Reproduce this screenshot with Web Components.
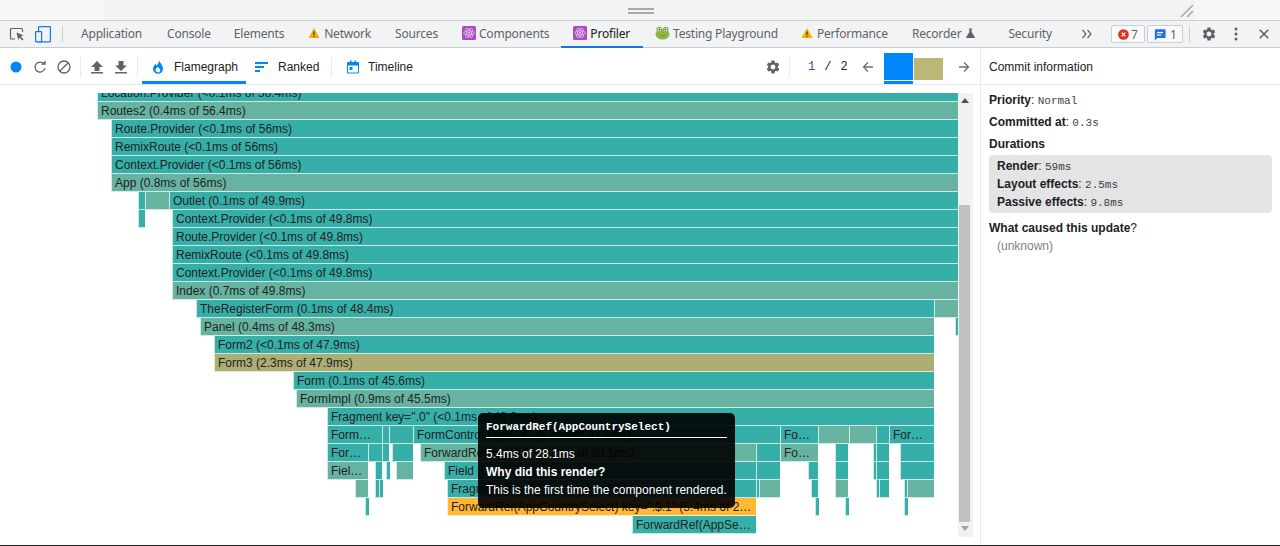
<!DOCTYPE html>
<html><head><meta charset="utf-8"><style>
html,body{margin:0;padding:0;background:#fff;overflow:hidden}
body{width:1280px;height:546px;font-family:"Liberation Sans",sans-serif;font-size:12px}
</style></head><body>
<dt-shell></dt-shell>
<script>
const svg=(w,h,vb,inner,extra='')=>`<svg width="${w}" height="${h}" viewBox="${vb}" ${extra}>${inner}</svg>`;
const GEAR='M19.14 12.94c.04-.3.06-.61.06-.94 0-.32-.02-.64-.07-.94l2.03-1.58c.18-.14.23-.41.12-.61l-1.92-3.32c-.12-.22-.37-.29-.59-.22l-2.39.96c-.5-.38-1.03-.7-1.62-.94l-.36-2.54c-.04-.24-.24-.41-.48-.41h-3.84c-.24 0-.43.17-.47.41l-.36 2.54c-.59.24-1.13.57-1.62.94l-2.39-.96c-.22-.08-.47 0-.59.22L2.74 8.87c-.12.21-.08.47.12.61l2.03 1.58c-.05.3-.09.63-.09.94s.02.64.07.94l-2.03 1.58c-.18.14-.23.41-.12.61l1.92 3.32c.12.22.37.29.59.22l2.39-.96c.5.38 1.03.7 1.62.94l.36 2.54c.05.24.24.41.48.41h3.84c.24 0 .44-.17.47-.41l.36-2.54c.59-.24 1.13-.56 1.62-.94l2.39.96c.22.08.47 0 .59-.22l1.92-3.32c.12-.22.07-.47-.12-.61l-2.01-1.58zM12 15.6c-1.98 0-3.6-1.62-3.6-3.6s1.62-3.6 3.6-3.6 3.6 1.62 3.6 3.6-1.62 3.6-3.6 3.6z';
const warn=svg(12,12,'0 0 12 12','<path d="M6 1 L11.6 11 H.4 Z" fill="#f2b200"/><rect x="5.4" y="4.4" width="1.2" height="3.6" fill="#333"/><rect x="5.4" y="8.8" width="1.2" height="1.2" fill="#333"/>');
const react=svg(14,14,'0 0 14 14','<rect width="14" height="14" rx="1.5" fill="#a94dc0"/><g fill="none" stroke="#e4c4ee" stroke-width=".8"><ellipse cx="7" cy="7" rx="5.2" ry="2.2"/><ellipse cx="7" cy="7" rx="5.2" ry="2.2" transform="rotate(60 7 7)"/><ellipse cx="7" cy="7" rx="5.2" ry="2.2" transform="rotate(120 7 7)"/></g><circle cx="7" cy="7" r="1.1" fill="#e4c4ee"/>');
const frog=svg(15,14,'0 0 15 14','<circle cx="4.2" cy="3.6" r="2.8" fill="#7fb43c"/><circle cx="10.8" cy="3.6" r="2.8" fill="#7fb43c"/><ellipse cx="7.5" cy="8.3" rx="7" ry="5.2" fill="#86bb45"/><circle cx="4.2" cy="3.4" r="1.5" fill="#fff"/><circle cx="10.8" cy="3.4" r="1.5" fill="#fff"/><circle cx="4.4" cy="3.6" r=".8" fill="#222"/><circle cx="10.6" cy="3.6" r=".8" fill="#222"/><path d="M3 8.6 Q7.5 10 12 8.6 Q7.5 12.6 3 8.6Z" fill="#e2604a"/>');
const flask=svg(11,12,'0 0 12 12','<path d="M4.2 1h3.6v1h-.6v3l3.4 5.4c.3.5 0 1.1-.6 1.1H2c-.6 0-.9-.6-.6-1.1L4.800 5V2h-.6z" fill="#5f6368"/>');

class DtTab extends HTMLElement{
  constructor(){super();this.attachShadow({mode:'open'}).innerHTML=`<style>
  :host{display:flex;align-items:center;gap:4px;height:26px;box-sizing:border-box;padding:0 var(--padr,12px) 2px 12px;font:12px "Noto Sans",sans-serif;color:#5f6368;white-space:nowrap;position:relative;letter-spacing:-.2px}
  :host([active]){color:#202124}
  :host([active])::after{content:"";position:absolute;left:0;right:0;bottom:-1px;height:2px;background:#1a73e8}
  </style><slot name="icon"></slot><slot></slot><slot name="after"></slot>`}
}
customElements.define('dt-tab',DtTab);

class DtTabbar extends HTMLElement{
  constructor(){super();this.attachShadow({mode:'open'}).innerHTML=`<style>
  :host{display:flex;align-items:center;height:28px;box-sizing:border-box;background:#f1f3f4;border-top:1px solid #cbcdd1;border-bottom:1px solid #cbcdd1;position:relative;padding-left:8px}
  .ic{display:flex;align-items:center;justify-content:center;flex:none}
  .sep{width:1px;height:16px;background:#cbcdd1;flex:none}
  .badge{display:flex;align-items:center;height:18px;box-sizing:border-box;border:1px solid #cbcdd1;border-radius:2px;background:#f8f9fa;font:12px "Noto Sans",sans-serif;color:#5f6368;padding:0 0 0 6px;flex:none}
  .right{display:flex;align-items:center;height:26px;margin-left:auto;padding-right:8px}
  </style>
  <div class="ic" style="width:18px">${svg(16,16,'0 0 16 16','<path d="M6 13H2.500a1 1 0 0 1-1-1V3.500a1 1 0 0 1 1-1h10a1 1 0 0 1 1 1V6" fill="none" stroke="#5f6368" stroke-width="1.2"/><path d="M7.500 6.500 14.500 9.300 11.800 10.500 14.500 13.400 13.200 14.600 10.600 11.600 9.200 14z" fill="#5f6368"/>')}</div>
  <div class="ic" style="width:16px;margin-left:9px">${svg(16,17,'0 0 16 17','<rect x="3.600" y=".6" width="11.800" height="15.200" rx=".6" fill="none" stroke="#1a73e8" stroke-width="1.2"/><rect x=".6" y="5.600" width="6" height="10.200" rx=".6" fill="#f1f3f4" stroke="#1a73e8" stroke-width="1.2"/>')}</div>
  <div class="sep" style="margin-left:11px"></div>
  <div style="width:6px"></div>
  <dt-tab style="--padr:13px">Application</dt-tab>
  <dt-tab style="--padr:11px">Console</dt-tab>
  <dt-tab>Elements</dt-tab>
  <dt-tab><span slot="icon" style="display:flex">${warn}</span>Network</dt-tab>
  <dt-tab>Sources</dt-tab>
  <dt-tab><span slot="icon" style="display:flex;margin-right:-1px">${react}</span>Components</dt-tab>
  <dt-tab active style="--padr:13px"><span slot="icon" style="display:flex;margin-right:-1px">${react}</span>Profiler</dt-tab>
  <dt-tab style="--padr:11px"><span slot="icon" style="display:flex;margin-right:-1px">${frog}</span>Testing Playground</dt-tab>
  <dt-tab><span slot="icon" style="display:flex">${warn}</span>Performance</dt-tab>
  <dt-tab style="--padr:20px">Recorder<span slot="after" style="display:flex">${flask}</span></dt-tab>
  <dt-tab>Security</dt-tab>
  <div class="right">
    <div class="ic" style="width:16px;margin-right:16px">${svg(12,10,'0 0 12 10','<path d="M1.500 1 5 5 1.500 9M6.500 1 10 5 6.500 9" fill="none" stroke="#5f6368" stroke-width="1.2"/>')}</div>
    <div class="badge" style="width:34px;gap:2px">${svg(11,11,'0 0 12 12','<circle cx="6" cy="6" r="5.800" fill="#d93025"/><path d="M4 4l4 4M8 4l-4 4" stroke="#fff" stroke-width="1.300"/>')}7</div>
    <div class="badge" style="width:36px;margin-left:2px;gap:4px">${svg(12,13,'0 0 14 14','<path d="M2 1h10.500a1 1 0 0 1 1 1v8a1 1 0 0 1-1 1H4L1 14V2a1 1 0 0 1 1-1z" fill="#1a73e8"/><rect x="3.500" y="4" width="7" height="1.400" fill="#fff"/><rect x="3.500" y="6.800" width="5" height="1.400" fill="#fff"/>')}1</div>
    <div class="sep" style="margin:0 11px 0 6px"></div>
    <div class="ic" style="width:16px">${svg(18,18,'0 0 24 24',`<path d="${GEAR}" fill="#5f6368"/>`)}</div>
    <div class="ic" style="width:16px;margin-left:11px">${svg(4,14,'0 0 4 14','<circle cx="2" cy="2" r="1.500" fill="#5f6368"/><circle cx="2" cy="7" r="1.500" fill="#5f6368"/><circle cx="2" cy="12" r="1.500" fill="#5f6368"/>')}</div>
    <div class="ic" style="width:16px;margin-left:12px">${svg(10,10,'0 0 10 10','<path d="M.7.7l8.600 8.600M9.300.7.7 9.300" stroke="#5f6368" stroke-width="1.600"/>')}</div>
  </div>`}
}
customElements.define('dt-tabbar',DtTabbar);

class DtTopstrip extends HTMLElement{
  constructor(){super();this.attachShadow({mode:'open'}).innerHTML=`<style>
  :host{display:flex;align-items:center;justify-content:center;height:20px;background:linear-gradient(90deg,#f6f7f7 0,#f6f7f7 103px,#f1f3f4 104px,#f1f3f4 1195px,#f6f8f8 1196px);position:relative}
  .grip{width:26px;height:6px;border-top:2px solid #a8abad;border-bottom:2px solid #a8abad;box-sizing:border-box;margin:2px 0 0 2px}
  .corner{position:absolute;left:1180px;top:4px}
  </style><div class="grip"></div><div class="corner">${svg(14,14,'0 0 14 14','<path d="M1 13 13 1M7 13 13 7" stroke="#a8abad" stroke-width="1.600"/>')}</div>`}
}
customElements.define('dt-topstrip',DtTopstrip);

class DtProfTool extends HTMLElement{
  constructor(){super();this.attachShadow({mode:'open'}).innerHTML=`<style>
  :host{display:flex;align-items:center;height:37px;box-sizing:border-box;padding-top:1px;flex:none;border-bottom:1px solid #e8eaed;font-size:12px;color:#202124;min-width:0}
  .i{display:flex;align-items:center;justify-content:center;flex:none;width:20px}
  .s{width:1px;height:20px;background:#e8eaed;flex:none}
  .t{display:flex;align-items:center;height:35px;box-sizing:border-box;flex:none;position:relative}
  .t svg{flex:none}
  .on::after{content:"";position:absolute;left:0;right:0;bottom:0;height:3px;background:#0088fa}
  .pg{font:12px "Liberation Mono",monospace;display:flex;gap:9px;flex:none;width:46px;margin-left:18px}
  .com{display:flex;gap:1px;height:35px;align-items:flex-start;flex:none;width:59px}
  .b1{position:relative;width:29px;height:35px;flex:none}
  .b1::before{content:"";position:absolute;left:0;right:0;top:4px;height:27px;background:#0088fa}
  .b1::after{content:"";position:absolute;left:0;right:0;bottom:0;height:3px;background:#0088fa}
  .b2{width:29px;height:22px;margin-top:9px;background:#bcb776;flex:none}
  </style>
  <div class="i" style="margin-left:6px">${svg(12,12,'0 0 12 12','<circle cx="6" cy="6" r="5.500" fill="#0088fa"/>')}</div>
  <div class="i" style="margin-left:4px">${svg(14,14,'0 0 14 14','<path d="M11.200 4.200A5 5 0 1 0 12 8" fill="none" stroke="#5f6368" stroke-width="1.300"/><path d="M8 4.800h4.600V.4z" fill="#5f6368"/>')}</div>
  <div class="i" style="margin-left:4px">${svg(14,14,'0 0 14 14','<circle cx="7" cy="7" r="6" fill="none" stroke="#5f6368" stroke-width="1.300"/><path d="M3 11 11 3" stroke="#5f6368" stroke-width="1.300"/>')}</div>
  <div class="s" style="margin-left:6px"></div>
  <div class="i" style="margin-left:6px">${svg(14,14,'0 0 14 14','<path d="M7 1 13 7H9.500v4h-5V7H1zM1 12h12v1.400H1z" fill="#5f6368"/>')}</div>
  <div class="i" style="margin-left:4px">${svg(14,14,'0 0 14 14','<path d="M4.500 1h5v4.500H13L7 11 1 5.500h3.500zM1 12h12v1.400H1z" fill="#5f6368"/>')}</div>
  <div class="s" style="margin-left:6px"></div>
  <div class="t on" style="margin-left:4px;width:104px">
    <span style="width:32px;display:flex;justify-content:center">${svg(12,14,'0 0 12 14','<path d="M6.800.2c.6 2.500-1 3.900-2.300 5.500-.4-.6-.5-1.300-.5-2C2.200 5 1 6.800 1 8.800 1 11.500 3.200 13.800 6 13.800s5-2.300 5-5c0-3.400-2.500-5.500-4.200-8.600zM6 12.400c-1.300 0-2.400-1-2.400-2.300 0-1.200.9-2 2.200-3.400.1.700 2.500 2 2.500 3.500 0 1.200-1 2.200-2.300 2.200z" fill="#0088fa"/>')}</span><span>Flamegraph</span></div>
  <div class="t" style="width:85px">
    <span style="width:32px;display:flex;justify-content:center">${svg(14,10,'0 0 14 10','<rect width="13" height="2" fill="#0088fa"/><rect y="4" width="9" height="2" fill="#0088fa"/><rect y="8" width="5" height="2" fill="#0088fa"/>')}</span><span>Ranked</span></div>
  <div class="s"></div>
  <div class="t" style="margin-left:14px">
    <span style="width:22px;display:flex">${svg(14,14,'0 0 14 14','<path d="M2 2h2V.6h1.600V2h2.800V.6H10V2h2a1 1 0 0 1 1 1v9.600a1 1 0 0 1-1 1H2a1 1 0 0 1-1-1V3a1 1 0 0 1 1-1zm0 3.400v7.200h10V5.400z" fill="#0088fa"/><rect x="3.500" y="7" width="3" height="3" fill="#0088fa"/>')}</span><span>Timeline</span></div>
  <div style="flex:1"></div>
  <div class="i">${svg(16,16,'0 0 24 24',`<path d="${GEAR}" fill="#5f6368"/>`)}</div>
  <div class="s" style="margin-left:6px"></div>
  <div class="pg"><span style="color:#4a3fb0">1</span><span>/</span><span>2</span></div>
  <div class="i" style="margin-left:4px">${svg(12,12,'0 0 12 12','<path d="M11 6H2M6 1.500 1.500 6 6 10.500" fill="none" stroke="#6a6f75" stroke-width="1.300"/>')}</div>
  <div class="com" style="margin-left:6px"><div class="b1"></div><div class="b2"></div></div>
  <div class="i" style="margin-left:11px;margin-right:6px">${svg(12,12,'0 0 12 12','<path d="M1 6h9M6 1.500 10.500 6 6 10.500" fill="none" stroke="#6a6f75" stroke-width="1.300"/>')}</div>`}
}
customElements.define('dt-prof-tool',DtProfTool);

const T='#37afa9',G='#66b3a1',O='#acae74',Y='#ffb833';
const ROWS=[
 [[97,958,T,'Location.Provider (<0.1ms of 56.4ms)']],
 [[97,958,G,'Routes2 (0.4ms of 56.4ms)']],
 [[111,958,T,'Route.Provider (<0.1ms of 56ms)']],
 [[111,958,T,'RemixRoute (<0.1ms of 56ms)']],
 [[111,958,T,'Context.Provider (<0.1ms of 56ms)']],
 [[111,958,G,'App (0.8ms of 56ms)']],
 [[138,145,T],[145,169,G],[169,958,T,'Outlet (0.1ms of 49.9ms)']],
 [[138,145,T],[172,958,T,'Context.Provider (<0.1ms of 49.8ms)']],
 [[172,958,T,'Route.Provider (<0.1ms of 49.8ms)']],
 [[172,958,T,'RemixRoute (<0.1ms of 49.8ms)']],
 [[172,958,T,'Context.Provider (<0.1ms of 49.8ms)']],
 [[172,958,G,'Index (0.7ms of 49.8ms)']],
 [[196,934,T,'TheRegisterForm (0.1ms of 48.4ms)'],[934,958,G]],
 [[200,934,G,'Panel (0.4ms of 48.3ms)'],[955,958,T]],
 [[214,934,T,'Form2 (<0.1ms of 47.9ms)']],
 [[214,934,O,'Form3 (2.3ms of 47.9ms)']],
 [[293,934,T,'Form (0.1ms of 45.6ms)']],
 [[296,934,G,'FormImpl (0.9ms of 45.5ms)']],
 [[327,934,T,'Fragment key=".0" (<0.1ms of 43.9ms)']],
 [[327,382,T,'Form…'],[382,389,T],[389,413,T],[413,780,T,'FormControl key=".3" (0.2ms of 31.1ms)'],[780,818,T,'Fo…'],[818,849,G],[849,876,G],[876,890,T],[889,934,T,'For…']],
 [[327,368,T,'For…'],[368,382,T],[382,389,T],[392,413,T],[420,756,G,'ForwardRef key=".0" (0.7ms of 30.1ms)'],[756,780,T],[780,818,G,'Fo…'],[835,848,T],[873,876,T],[876,889,T],[900,934,T]],
 [[327,368,G,'Fiel…'],[375,382,T],[386,389,T],[396,413,G],[444,756,T,'Field (0.3ms of 29.4ms)'],[756,780,T],[808,818,T],[835,848,T],[873,876,T],[876,889,T],[900,934,T]],
 [[355,368,G],[375,378,T],[379,382,T],[447,756,T,'Fragment key=".0" (<0.1ms of 28.1ms)'],[756,759,T],[759,780,G],[811,818,T],[835,848,G],[876,879,T],[879,889,T],[904,906,T],[907,934,G]],
 [[365,368,T],[447,756,Y,'ForwardRef(AppCountrySelect) key=".$.1" (5.4ms of 2…'],[815,818,T],[845,848,T],[904,907,T]],
 [[632,756,T,'ForwardRef(AppSe…']]
];
class DtFlameBar extends HTMLElement{
  constructor(){super();this.attachShadow({mode:'open'}).innerHTML=`<style>
  :host{display:block;position:absolute;top:0;height:18px;box-sizing:border-box;background:var(--c);border:solid rgba(255,255,255,.72);border-width:0 0 1px 1px;font:12px/18px "Liberation Sans",sans-serif;color:#222;white-space:nowrap;overflow:hidden;padding-left:3px}
  </style><slot></slot>`}
}
customElements.define('dt-flame-bar',DtFlameBar);
class DtFlameRow extends HTMLElement{
  constructor(){super();this.attachShadow({mode:'open'}).innerHTML=`<style>:host{display:block;position:relative;height:18px}</style><slot></slot>`}
}
customElements.define('dt-flame-row',DtFlameRow);

class DtFlamegraph extends HTMLElement{
  constructor(){super();this.attachShadow({mode:'open'}).innerHTML=`<style>
  :host{display:block;position:relative;height:444px;overflow:hidden;margin-top:8px;width:980px;flex:none}
  .rows{margin-top:-9px;width:958px}
  .sb{position:absolute;left:958px;top:0;width:15px;height:444px;background:#f1f1f1}
  .th{position:absolute;left:1px;top:112px;width:11px;height:317px;background:#c1c1c1}
  .u,.d{position:absolute;left:3px;width:0;height:0;border-left:4px solid transparent;border-right:4px solid transparent}
  .u{top:5px;border-bottom:5px solid #505050}
  .d{top:433px;border-top:5px solid #a3a3a3}
  </style><div class="rows"></div><div class="sb"><div class="th"></div><div class="u"></div><div class="d"></div></div><slot></slot>`;
  const r=this.shadowRoot.querySelector('.rows');
  for(const row of ROWS){const e=document.createElement('dt-flame-row');
    for(const [a,b,c,t] of row){const n=document.createElement('dt-flame-bar');n.style.left=a+'px';n.style.width=(b-a)+'px';n.style.setProperty('--c',c);if(t)n.textContent=t;e.appendChild(n);}
    r.appendChild(e);}
  }
}
customElements.define('dt-flamegraph',DtFlamegraph);

class DtTooltip extends HTMLElement{
  constructor(){super();this.attachShadow({mode:'open'}).innerHTML=`<style>
  :host{display:block;position:absolute;left:478px;top:320px;box-sizing:border-box;width:257px;height:95px;background:rgba(0,0,0,.9);border-radius:5px;color:#fff;padding:6px 8px;font:12px/18px "Liberation Sans",sans-serif}
  .h{font:bold 11px/14px "Liberation Mono",monospace;border-bottom:1px solid #fff;height:14px;padding-bottom:3px;margin:1px 0 7px}
  b{display:block}
  </style><div class="h">ForwardRef(AppCountrySelect)</div><div>5.4ms of 28.1ms</div><b>Why did this render?</b><div>This is the first time the component rendered.</div>`}
}
customElements.define('dt-tooltip',DtTooltip);

class DtCommit extends HTMLElement{
  constructor(){super();this.attachShadow({mode:'open'}).innerHTML=`<style>
  :host{display:block;width:300px;box-sizing:border-box;flex:none;border-left:1px solid #e8eaed;font:12px/18px "Liberation Sans",sans-serif;color:#202124}
  .hd{height:37px;box-sizing:border-box;border-bottom:1px solid #e8eaed;padding:2px 8px 0;display:flex;align-items:center}
  .bd{padding:6px 8px}
  .l{font-weight:bold}
  .r{height:22px;line-height:18px}
  .m{font:11px "Liberation Mono",monospace;color:#3b3f44}
  .box{background:#e4e4e4;border-radius:4px;padding:2px 8px;margin:-2px 0 6px}
  .box div{height:18px}
  .u{color:#808388;padding-left:8px}
  </style><div class="hd">Commit information</div><div class="bd">
  <div class="r"><span class="l">Priority</span>: <span class="m">Normal</span></div>
  <div class="r"><span class="l">Committed at</span>: <span class="m">0.3s</span></div>
  <div class="r l">Durations</div>
  <div class="box"><div><span class="l">Render</span>: <span class="m">59ms</span></div><div><span class="l">Layout effects</span>: <span class="m">2.5ms</span></div><div><span class="l">Passive effects</span>: <span class="m">9.8ms</span></div></div>
  <div class="r" style="height:18px;margin-top:2px"><span class="l">What caused this update</span>?</div>
  <div class="u">(unknown)</div>
  </div>`}
}
customElements.define('dt-commit',DtCommit);

class DtShell extends HTMLElement{
  constructor(){super();this.attachShadow({mode:'open'}).innerHTML=`<style>
  :host{display:block;width:1280px;height:546px;position:relative;overflow:hidden;background:#fff;box-sizing:border-box;border-bottom:1px solid #202124}
  .main{display:flex;height:497px}
  .left{width:980px;flex:none;display:flex;flex-direction:column;position:relative}
  </style>
  <dt-topstrip></dt-topstrip><dt-tabbar></dt-tabbar>
  <div class="main"><div class="left"><dt-prof-tool></dt-prof-tool>
  <dt-flamegraph><dt-tooltip></dt-tooltip></dt-flamegraph></div><dt-commit></dt-commit></div>`}
}
customElements.define('dt-shell',DtShell);
</script></body></html>
